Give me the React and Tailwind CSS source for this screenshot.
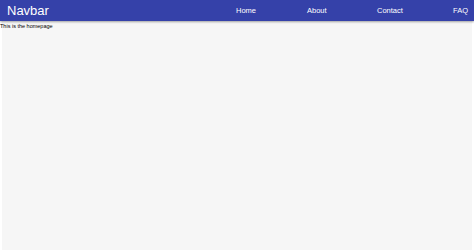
import React from "react";

function App() {
  return (
    <div className="w-[474px] h-[252px] bg-white overflow-hidden font-['Liberation_Sans',Arial,sans-serif]">
      <nav className="h-[21px] bg-[#3541a9] flex items-center justify-between pl-[7px] pr-[6px] shadow-[0_1px_2px_rgba(0,0,0,0.35)] relative">
        <span className="text-white text-[13px] leading-none">Navbar</span>
        <ul className="flex items-center text-white text-[7.5px] leading-none">
          <li className="w-[71px]">Home</li>
          <li className="w-[70px]">About</li>
          <li className="w-[76px]">Contact</li>
          <li>FAQ</li>
        </ul>
      </nav>
      <main className="h-[229px] mx-[2px] bg-[#f6f6f6]">
        <p className="text-black text-[5.5px] leading-[8px] -ml-[2px] pt-[1px]">This is the homepage</p>
      </main>
    </div>
  );
}

export default App;
